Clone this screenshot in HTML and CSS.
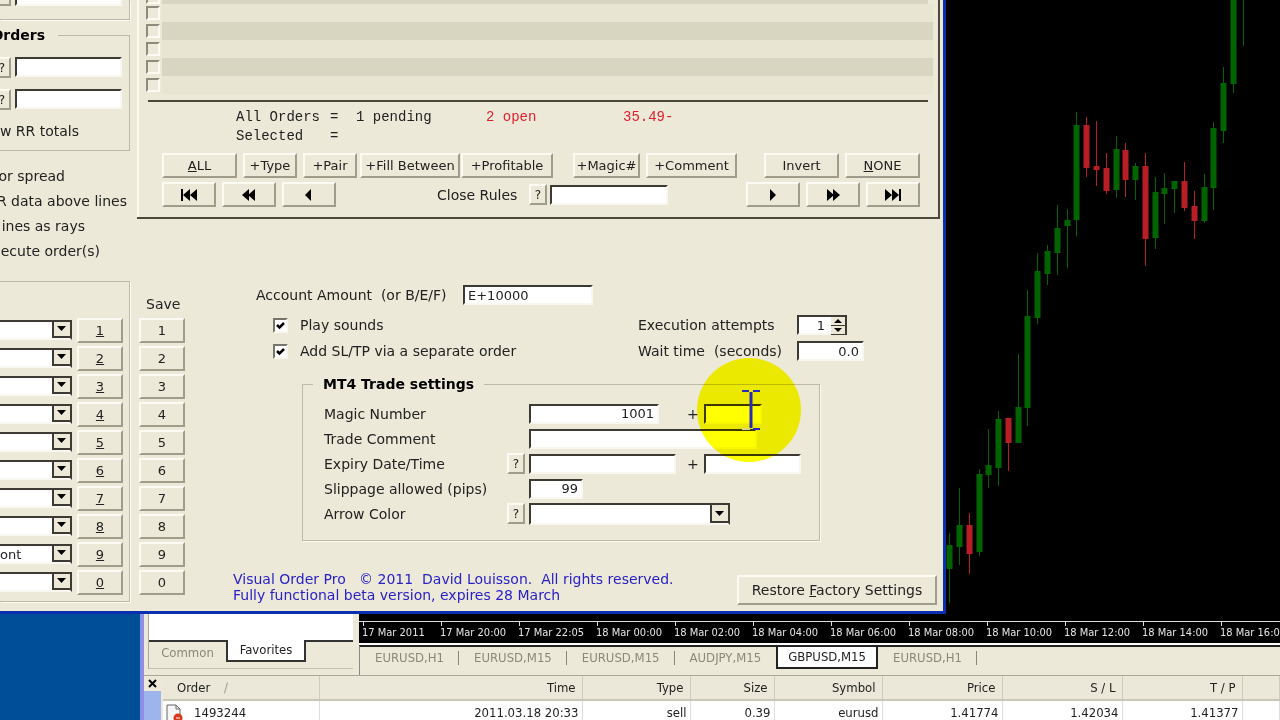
FILE: index.html
```html
<!DOCTYPE html>
<html lang="en">
<head>
<meta charset="utf-8">
<title>Visual Order Pro</title>
<link rel="stylesheet" href="styles.css">
</head>
<body>
<div class="desktop">

<main class="app">
  <div class="workspace">
    <aside class="navigator">
      <div class="nav-list"></div>
      <div class="nav-tabs">
        <button class="nav-tab">Common</button>
        <button class="nav-tab nav-tab-on">Favorites</button>
        <span class="nav-tab-fill"></span>
      </div>
    </aside>
    <section class="chart-pane">
      <div class="chart">
        <svg class="candles" width="921" height="615" viewBox="360 0 921 615" aria-hidden="true">
          <path class="wick up" d="M950.5 533V603M960.5 488V565M980.5 469V556M989.5 429V488M999.5 411V486M1019.5 354V443M1028.5 290V426M1038.5 253V324M1048.5 245V285M1058.5 205V275M1068.5 209V268M1077.5 112V236M1117.5 136V198M1136.5 163V200M1156.5 177V249M1165.5 173V224M1175.5 181V213M1205.5 174V223M1214.5 122V210M1224.5 67V143M1234.5 0V93M1244.5 0V46"/>
          <path class="wick down" d="M970.5 513V574M1009.5 418V471M1087.5 117V177M1097.5 121V186M1107.5 153V194M1126.5 143V197M1146.5 153V266M1185.5 162V211M1195.5 191V239"/>
          <path class="bar up" d="M950.5 545V569M960.5 525V547M980.5 474V552M989.5 465V475M999.5 419V468M1019.5 407V443M1028.5 316V408M1038.5 271V318M1048.5 251V274M1058.5 228V253M1068.5 220V226M1077.5 125V220M1117.5 149V190M1136.5 166V180M1156.5 192V238M1165.5 188V194M1175.5 181V189M1205.5 187V221M1214.5 128V188M1224.5 83V131M1234.5 0V84"/>
          <path class="bar down" d="M970.5 525V554M1009.5 418V443M1087.5 125V168M1097.5 166V170M1107.5 168V191M1126.5 150V180M1146.5 166V239M1185.5 181V208M1195.5 206V221"/>
        </svg>
      </div>
      <div class="axis">
        <span>17 Mar 2011</span><span>17 Mar 20:00</span><span>17 Mar 22:05</span><span>18 Mar 00:00</span><span>18 Mar 02:00</span><span>18 Mar 04:00</span><span>18 Mar 06:00</span><span>18 Mar 08:00</span><span>18 Mar 10:00</span><span>18 Mar 12:00</span><span>18 Mar 14:00</span><span>18 Mar 16:00</span>
      </div>
      <div class="chart-tabs">
        <button class="chart-tab">EURUSD,H1</button>
        <button class="chart-tab">EURUSD,M15</button>
        <button class="chart-tab">EURUSD,M15</button>
        <button class="chart-tab last">AUDJPY,M15</button>
        <button class="chart-tab chart-tab-on">GBPUSD,M15</button>
        <button class="chart-tab">EURUSD,H1</button>
      </div>
    </section>
  </div>
  <section class="terminal">
    <div class="terminal-grip">
      <button class="close" aria-label="Close terminal"><svg width="9" height="9" viewBox="0 0 9 9"><path d="M1 1L8 8M8 1L1 8" stroke="#000" stroke-width="2"/></svg></button>
    </div>
    <table class="trades">
      <colgroup><col class="c-order"><col class="c-time"><col class="c-type"><col class="c-size"><col class="c-type"><col class="c-price"><col class="c-price"><col class="c-price"><col></colgroup>
      <thead><tr><th class="left">Order <span class="sort">∕</span></th><th>Time</th><th>Type</th><th>Size</th><th>Symbol</th><th>Price</th><th>S / L</th><th>T / P</th><th></th></tr></thead>
      <tbody><tr>
        <td class="left"><span class="ticket"><svg width="17" height="18" viewBox="0 0 17 18" aria-hidden="true"><path d="M1 1H10L14 5V18H1Z" fill="#f6f6f6" stroke="#666"/><path d="M10 1V5H14" fill="none" stroke="#666"/><circle cx="12" cy="14" r="4.5" fill="#d8391c"/><path d="M10 14H14" stroke="#fff" stroke-width="1"/></svg>1493244</span></td>
        <td>2011.03.18 20:33</td><td>sell</td><td>0.39</td><td>eurusd</td><td>1.41774</td><td>1.42034</td><td>1.41377</td><td></td>
      </tr></tbody>
    </table>
  </section>
</main>

<form class="dialog">
  <div class="side">
    <div class="group group-cut">
      <div class="side-row"><button type="button" class="btn help">?</button><input class="field side-field" aria-label="Value"></div>
    </div>
    <fieldset class="group group-orders">
      <legend class="side-legend">Orders</legend>
      <div class="side-row"><button type="button" class="btn help">?</button><input class="field side-field" aria-label="First value"></div>
      <div class="side-row"><button type="button" class="btn help">?</button><input class="field side-field" aria-label="Second value"></div>
      <div class="cut to-totals">ow RR totals</div>
    </fieldset>
    <div class="side-options">
      <div class="cut to-spread">or spread</div>
      <div class="cut to-lines">R data above lines</div>
      <div class="cut to-rays">ines as rays</div>
      <div class="cut to-exec">ecute order(s)</div>
    </div>
    <div class="group presets">
      <div class="preset"><select class="combo" aria-label="Preset 1"><option></option></select><button type="button" class="btn"><u>1</u></button></div>
      <div class="preset"><select class="combo" aria-label="Preset 2"><option></option></select><button type="button" class="btn"><u>2</u></button></div>
      <div class="preset"><select class="combo" aria-label="Preset 3"><option></option></select><button type="button" class="btn"><u>3</u></button></div>
      <div class="preset"><select class="combo" aria-label="Preset 4"><option></option></select><button type="button" class="btn"><u>4</u></button></div>
      <div class="preset"><select class="combo" aria-label="Preset 5"><option></option></select><button type="button" class="btn"><u>5</u></button></div>
      <div class="preset"><select class="combo" aria-label="Preset 6"><option></option></select><button type="button" class="btn"><u>6</u></button></div>
      <div class="preset"><select class="combo" aria-label="Preset 7"><option></option></select><button type="button" class="btn"><u>7</u></button></div>
      <div class="preset"><select class="combo" aria-label="Preset 8"><option></option></select><button type="button" class="btn"><u>8</u></button></div>
      <div class="preset"><select class="combo" aria-label="Preset 9"><option>ont</option></select><button type="button" class="btn"><u>9</u></button></div>
      <div class="preset"><select class="combo" aria-label="Preset 0"><option></option></select><button type="button" class="btn"><u>0</u></button></div>
    </div>
  </div>

  <div class="body">
    <section class="orders">
      <div class="order-rows">
        <div class="order-row first"><input type="checkbox" class="pick" aria-label="Order 1"><span class="stripe dark"></span></div>
        <div class="order-row"><input type="checkbox" class="pick" aria-label="Order 2"><span class="stripe"></span></div>
        <div class="order-row"><input type="checkbox" class="pick" aria-label="Order 3"><span class="stripe dark"></span></div>
        <div class="order-row"><input type="checkbox" class="pick" aria-label="Order 4"><span class="stripe"></span></div>
        <div class="order-row"><input type="checkbox" class="pick" aria-label="Order 5"><span class="stripe dark"></span></div>
        <div class="order-row"><input type="checkbox" class="pick" aria-label="Order 6"><span class="stripe"></span></div>
      </div>
      <hr class="rule">
      <div class="summary">
        <span>All Orders</span><span>=</span><span>1 pending</span><span class="loss">2 open</span><span class="loss">35.49-</span>
        <span>Selected</span><span>=</span>
      </div>
      <div class="tools">
        <button type="button" class="btn w-wide"><u>A</u>LL</button>
        <button type="button" class="btn w-nav">+Type</button>
        <button type="button" class="btn w-nav">+Pair</button>
        <button type="button" class="btn w-fill">+Fill Between</button>
        <button type="button" class="btn w-profit">+Profitable</button>
        <button type="button" class="btn w-magic">+Magic#</button>
        <button type="button" class="btn w-comment">+Comment</button>
        <button type="button" class="btn w-wide push">Invert</button>
        <button type="button" class="btn w-wide"><u>N</u>ONE</button>
      </div>
      <div class="tools">
        <button type="button" class="btn w-nav" aria-label="First"><svg width="18" height="12" viewBox="0 0 18 12"><path d="M1 0H3V12H1ZM10 0V12L3 6ZM17 0V12L10 6Z"/></svg></button>
        <button type="button" class="btn w-nav" aria-label="Fast back"><svg width="14" height="12" viewBox="0 0 14 12"><path d="M7 0V12L0 6ZM13 0V12L6 6Z"/></svg></button>
        <button type="button" class="btn w-nav" aria-label="Back"><svg width="8" height="12" viewBox="0 0 8 12"><path d="M6 0V12L0 6Z"/></svg></button>
        <label class="close-rules" for="rules">Close Rules</label>
        <button type="button" class="btn help">?</button>
        <input id="rules" class="field rules-field">
        <button type="button" class="btn w-nav push" aria-label="Forward"><svg width="8" height="12" viewBox="0 0 8 12"><path d="M1 0V12L7 6Z"/></svg></button>
        <button type="button" class="btn w-nav" aria-label="Fast forward"><svg width="14" height="12" viewBox="0 0 14 12"><path d="M1 0V12L8 6ZM7 0V12L14 6Z"/></svg></button>
        <button type="button" class="btn w-nav" aria-label="Last"><svg width="18" height="12" viewBox="0 0 18 12"><path d="M1 0V12L8 6ZM8 0V12L15 6ZM15 0H17V12H15Z"/></svg></button>
      </div>
    </section>

    <div class="lower">
      <div class="save">
        <span class="save-title">Save</span>
        <button type="button" class="btn">1</button><button type="button" class="btn">2</button><button type="button" class="btn">3</button><button type="button" class="btn">4</button><button type="button" class="btn">5</button><button type="button" class="btn">6</button><button type="button" class="btn">7</button><button type="button" class="btn">8</button><button type="button" class="btn">9</button><button type="button" class="btn">0</button>
      </div>
      <div class="settings">
        <div class="account">
          <label for="amount">Account Amount &nbsp;(or B/E/F)</label>
          <input id="amount" class="field w-magicno" value="E+10000">
        </div>
        <div class="options">
          <label class="check"><input type="checkbox" class="tick" checked>Play sounds</label>
          <label for="attempts">Execution attempts</label>
          <div class="spin">
            <input id="attempts" class="field spin-field" value="1">
            <div class="spin-buttons">
              <button type="button" aria-label="More"><svg width="8" height="4" viewBox="0 0 8 4"><path d="M0 4H8L4 0Z"/></svg></button>
              <button type="button" aria-label="Fewer"><svg width="8" height="4" viewBox="0 0 8 4"><path d="M0 0H8L4 4Z"/></svg></button>
            </div>
          </div>
          <label class="check"><input type="checkbox" class="tick" checked>Add SL/TP via a separate order</label>
          <label for="wait">Wait time &nbsp;(seconds)</label>
          <input id="wait" class="field num w-wait" value="0.0">
        </div>
        <fieldset class="group trade">
          <legend>MT4 Trade settings</legend>
          <div class="trade-grid">
            <label for="magic">Magic Number</label><span></span>
            <input id="magic" class="field num w-magicno" value="1001"><span>+</span><input class="field w-short" aria-label="Magic number increment">
            <label for="comment">Trade Comment</label><span></span>
            <input id="comment" class="field w-text span">
            <label for="expiry">Expiry Date/Time</label><button type="button" class="btn help">?</button>
            <input id="expiry" class="field w-date"><span>+</span><input class="field w-time" aria-label="Expiry time">
            <label for="slip">Slippage allowed (pips)</label><span></span>
            <input id="slip" class="field num w-slip span" value="99">
            <label for="arrow">Arrow Color</label><button type="button" class="btn help">?</button>
            <select id="arrow" class="combo w-arrow span"><option></option></select>
          </div>
          <div class="spotlight"></div>
          <svg class="ibeam" width="20" height="42" viewBox="0 0 20 42" aria-hidden="true"><path d="M1 2H8M12 2H19M12 40H19" fill="none" stroke="#2a2ab8" stroke-width="2"/><path d="M10 3V39" stroke="#2a2ab8" stroke-width="3"/><path d="M1 40H9" stroke="#d8d490" stroke-width="2"/></svg>
        </fieldset>
        <footer class="foot">
          <p>Visual Order Pro &nbsp;&nbsp;© 2011 &nbsp;David Louisson. &nbsp;All rights reserved.<br>Fully functional beta version, expires 28 March</p>
          <button type="button" class="btn restore">Restore <u>F</u>actory Settings</button>
        </footer>
      </div>
    </div>
  </div>
</form>

</div>
</body>
</html>
```

FILE: styles.css
```css
* { box-sizing: border-box; }

body {
  margin: 0;
  overflow: hidden;
  font: 14px/18px "DejaVu Sans", sans-serif;
  color: #222;
}

button, input, select { font: inherit; font-size: 13px; color: inherit; margin: 0; }

.desktop {
  position: relative;
  height: 100vh;
  background: #004e98;
  overflow: hidden;
}

/* Trading terminal behind the dialog */
.app {
  display: flex;
  flex-direction: column;
  height: 100%;
  margin-left: 140px;
  border-left: 4px solid #8c8fe6;
  background: #ece9d8;
  font-family: "DejaVu Sans Condensed", "DejaVu Sans", sans-serif;
  font-size: 13px;
}

.workspace { display: flex; flex: 1; min-height: 0; border-bottom: 1px solid #aca899; }

.navigator {
  display: flex;
  flex-direction: column;
  width: 205px;
  margin: 0 6px 6px 4px;
  border-left: 1px solid #aca899;
  border-bottom: 1px solid #c6c3b4;
}
.nav-list { flex: 1; background: #fff; }
.nav-tabs { display: flex; height: 28px; background: #ece9d8; }
.nav-tab {
  width: 77px;
  height: 24px;
  padding: 0;
  border: 0;
  border-top: 2px solid #333;
  background: none;
  color: #8b887a;
}
.nav-tab-on {
  width: 80px;
  height: 22px;
  border: 2px solid #333;
  border-top: 0;
  background: #fff;
  color: #222;
}
.nav-tab-fill { flex: 1; border-top: 2px solid #333; }

.chart-pane { display: flex; flex: 1; flex-direction: column; min-width: 0; }
.chart { flex: 1; min-height: 0; overflow: hidden; background: #000; }
.candles { display: block; }
.wick { fill: none; stroke-width: 1; }
.bar { fill: none; stroke-width: 6; }
.up { stroke: #006400; }
.down { stroke: #b81e26; }

.axis {
  display: flex;
  height: 24px;
  overflow: hidden;
  padding-left: 3px;
  border-top: 1px solid #ddd;
  border-bottom: 2px solid #fff;
  background: #000;
  color: #e6e6e6;
  font-size: 11px;
  line-height: 16px;
}
.axis span { flex: 0 0 78px; padding-top: 3px; white-space: nowrap; background: linear-gradient(#ddd, #ddd) 1px 0 / 1px 4px no-repeat; }

.chart-tabs {
  display: flex;
  height: 30px;
  border-top: 2px solid #222;
  border-left: 1px solid #888;
}
.chart-tab {
  height: 21px;
  padding: 0 15px;
  border: 0;
  background: linear-gradient(#8b887a, #8b887a) right 4px / 1px 14px no-repeat;
  color: #8b887a;
}
.chart-tab.last { background: none; }
.chart-tab-on {
  height: 22px;
  padding: 0 10px;
  border: 2px solid #222;
  border-top: 0;
  background: #fff;
  color: #222;
}

.terminal { display: flex; height: 44px; overflow: hidden; }
.terminal-grip { width: 19px; background: #9db5ec; border-right: 2px solid #ece9d8; }
.close { display: flex; width: 100%; height: 15px; align-items: center; justify-content: center; padding: 0; border: 0; background: #ece9d8; }
.trades { flex: 1; width: 100%; table-layout: fixed; border-collapse: collapse; background: #fff; }
.trades th, .trades td { padding: 0 3px; text-align: right; font-weight: 400; white-space: nowrap; border-right: 1px solid #ddd; }
.trades th { height: 24px; padding-right: 6px; background: #ebe8d9; border-color: #d0ccbc; border-bottom: 2px solid #cbc7b8; }
.trades td { height: 24px; }
.trades .left { text-align: left; }
.trades th.left { padding-left: 14px; }
.sort { padding-left: 10px; color: #999; }
.ticket { display: flex; align-items: center; gap: 11px; }
.c-order { width: 156px; }
.c-time { width: 263px; }
.c-type { width: 108px; }
.c-size { width: 84px; }
.c-price { width: 120px; }

/* Dialog window */
.dialog {
  position: absolute;
  top: 0;
  left: 0;
  display: flex;
  border: solid #0a2fb0;
  border-width: 0 3px 3px 0;
  background: #ece9d8;
}
.side { width: 137px; overflow: hidden; white-space: nowrap; }
.body { width: 806px; }

.btn {
  height: 25px;
  padding: 0;
  border: 2px solid;
  border-color: #fbfaf3 #a09c8c #a09c8c #fbfaf3;
  background: #ece9d8;
  text-align: center;
  white-space: nowrap;
}
.btn svg { display: block; margin: 0 auto; }
.help { width: 18px; height: 21px; font-size: 12px; }

.field {
  height: 20px;
  padding: 0 3px;
  border: 2px solid;
  border-color: #3c3a32 #f8f7f0 #f8f7f0 #3c3a32;
  border-radius: 0;
  background: #fff;
}
.num { text-align: right; }

.combo {
  appearance: none;
  height: 20px;
  padding: 0;
  border: 2px solid;
  border-color: #3c3a32;
  border-bottom-color: #f8f7f0;
  border-radius: 0;
  background:
    url("data:image/svg+xml,%3Csvg xmlns='http://www.w3.org/2000/svg' width='18' height='18'%3E%3Cpath d='M0 0H18V18H0Z' fill='%233c3a32'/%3E%3Cpath d='M2 0H18V16H2Z' fill='%23ece9d8'/%3E%3Cpath d='M5 6H14L9.5 11Z'/%3E%3C/svg%3E") right bottom no-repeat #fff;
}

.group {
  position: relative;
  min-width: 0;
  margin: 0;
  padding: 0;
  border: 1px solid #bcb9a9;
  box-shadow: 1px 1px #fbfaf3;
}
legend { padding: 0 10px; font-weight: 700; line-height: 20px; color: #000; }

/* Left column, running off the screen edge */
.side .group { width: 130px; border-left: 0; }
.side .side-row { display: flex; align-items: center; height: 32px; margin-left: -7px; gap: 4px; }
.side .group-cut { height: 20px; border-top: 0; overflow: hidden; }
.side .group-cut .side-row { height: 6px; align-items: flex-end; }
.side-field { width: 107px; }
.group-orders { height: 126px; margin-top: 5px; box-shadow: none; }
.side-legend { display: flex; justify-content: flex-end; width: 58px; padding: 0 13px 0 0; }
.group-orders .side-row:nth-of-type(1) { margin-top: 6px; }
.cut { display: flex; justify-content: flex-end; }
.to-totals { width: 79px; margin-top: 7px; }
.side-options { display: grid; grid-auto-rows: 25px; align-items: center; padding-top: 12px; }
.to-spread { width: 65px; }
.to-lines { width: 127px; }
.to-rays { width: 85px; }
.to-exec { width: 100px; }
.presets, .save { display: flex; flex-direction: column; gap: 3px; }
.side .presets { margin-top: 18px; padding: 36px 0 6px; border-top: 1px solid #bcb9a9; }
.preset { display: flex; gap: 5px; }
.preset .combo { width: 72px; margin-top: 2px; border-left: 0; }
.preset .btn, .save .btn { width: 46px; }

/* Order list panel */
.orders {
  width: 803px;
  padding: 0 10px 10px 9px;
  border: solid #4a473b;
  border-width: 0 2px 2px 0;
  box-shadow: inset 2px 0 #fbfaf3;
}
.order-row { display: flex; align-items: center; gap: 2px; height: 18px; }
.order-row.first { height: 4px; align-items: flex-end; overflow: hidden; }
.pick {
  appearance: none;
  width: 14px;
  height: 14px;
  border: 2px solid;
  border-color: #8f8b7c #fbfaf3 #fbfaf3 #8f8b7c;
}
.stripe { flex: 1; margin-right: -5px; align-self: stretch; background: #e8e5d3; }
.dark { background: #d8d5c0; }
.rule { height: 2px; margin: 6px 0 6px 2px; border: 0; background: #4a473b; }
.summary {
  display: grid;
  grid-template-columns: 94px 26px 130px 137px 1fr;
  padding-left: 90px;
  font: 14px/19px "Liberation Mono", monospace;
}
.loss { color: #e02030; }
.tools { display: flex; align-items: center; height: 25px; padding: 0 8px 0 16px; gap: 6px; }
.summary + .tools { margin: 7px 0 4px; }
.tools .btn { flex-shrink: 0; }
.w-wide { width: 75px; }
.w-nav { width: 54px; }
.w-fill { width: 100px; margin-left: -3px; }
.w-profit { width: 92px; margin-left: -5px; }
.w-magic { width: 67px; margin-left: 14px; }
.w-comment { width: 91px; }
.tools .push { margin-left: auto; }
.close-rules { width: 86px; margin-left: 95px; }
.rules-field { width: 118px; margin-left: -3px; }
.tools svg { fill: #000; }

/* Save column and account settings */
.lower { display: flex; padding: 0 6px 6px 2px; }
.save { padding-top: 76px; }
.save-title { padding-left: 7px; margin-bottom: 2px; }
.settings { flex: 1; margin-left: 48px; padding-top: 63px; }
.account { display: flex; align-items: center; height: 26px; padding-left: 23px; }
.account label { width: 207px; }
.options {
  display: grid;
  grid-template-columns: 365px 159px auto;
  grid-auto-rows: 26px;
  align-items: center;
  justify-content: start;
  padding: 4px 0 10px 40px;
}
.check { display: flex; align-items: center; gap: 12px; }
.tick {
  appearance: none;
  width: 15px;
  height: 15px;
  border: 2px solid;
  border-color: #77746a #f8f7f0 #f8f7f0 #77746a;
  background: #fff;
}
.tick:checked { background: url("data:image/svg+xml,%3Csvg xmlns='http://www.w3.org/2000/svg' width='11' height='11'%3E%3Cpath d='M2 5L4.500 7.500L9 3' fill='none' stroke='%23000' stroke-width='2.500'/%3E%3C/svg%3E") center no-repeat #fff; }
.spin { display: flex; }
.spin-field { width: 34px; padding-right: 6px; text-align: right; border-right: 0; }
.spin-buttons { display: grid; width: 16px; height: 20px; border: solid #3c3a32; border-width: 2px 2px 1px 0; background: #3c3a32; gap: 1px; }
.spin-buttons button { display: flex; align-items: center; justify-content: center; min-height: 0; padding: 0; border: 0; background: #ece9d8; }
.w-wait { width: 67px; }

.trade { width: 518px; margin-left: 69px; padding: 7px 0 14px 21px; }
.trade legend { margin-left: -11px; }
.trade-grid {
  display: grid;
  grid-template-columns: 183px 22px 158px 17px 1fr;
  grid-auto-rows: 25px;
  align-items: center;
}
.span { grid-column: span 3; }
.w-magicno { width: 130px; }
.w-short { width: 58px; }
.w-text { width: 228px; }
.w-date { width: 147px; }
.w-time { width: 97px; }
.w-slip { width: 54px; }
.w-arrow { width: 201px; height: 22px; }

/* Pointer highlight */
.spotlight {
  position: absolute;
  top: -36px;
  left: 394px;
  width: 104px;
  height: 104px;
  border-radius: 50%;
  background: #ff0;
  mix-blend-mode: multiply;
}
.ibeam { position: absolute; top: -5px; left: 438px; }

.foot { display: flex; align-items: flex-end; justify-content: space-between; margin-top: 30px; }
.foot p { margin: 0 0 2px; color: #2a20c8; line-height: 16px; }
.restore { width: 200px; height: 30px; font-size: 14px; }
```
